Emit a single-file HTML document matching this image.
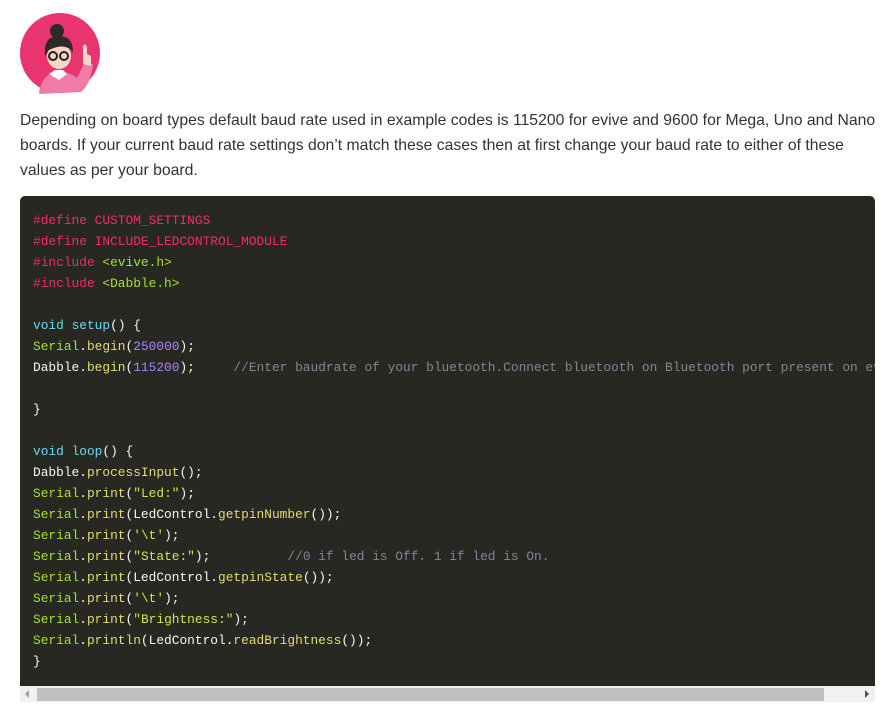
<!DOCTYPE html>
<html><head><meta charset="utf-8"><style>
body{margin:0;background:#fff;width:892px;height:708px;overflow:hidden;font-family:"Liberation Sans",sans-serif;}
p{position:absolute;left:20px;top:108px;margin:0;width:880px;font-size:15.75px;line-height:25px;color:#333;white-space:nowrap;}
.code{position:absolute;left:20px;top:196px;width:855px;height:490px;background:#272822;border-radius:5px 5px 0 0;overflow:hidden;}
pre{margin:0;position:absolute;left:13px;top:14px;font-family:"Liberation Mono",monospace;font-size:12.85px;line-height:21px;color:#f8f8f2;}
.k{color:#f92672}.c{color:#66d9ef}.g{color:#a6e22e}.y{color:#e6db74}.n{color:#ae81ff}.m{color:#7c8799}.s{color:#d5e34b}
.sb{position:absolute;left:20px;top:686px;width:855px;height:16px;background:#f1f1f1;}
.th{position:absolute;left:37px;top:688px;width:787px;height:13px;background:#c1c1c1;}
</style></head><body>
<svg width="82" height="82" style="position:absolute;left:19px;top:12px" viewBox="0 0 82 82">
<circle cx="41" cy="41" r="40" fill="#e8356f"/>
<path d="M20 82 Q22 62 38 60 Q52 60 58 66 L66 50 L74 52 Q72 72 62 80 Z" fill="#f07aa8"/>
<path d="M30 62 L40 68 L48 62 L44 58 L36 58Z" fill="#fff"/>
<ellipse cx="40" cy="44" rx="12" ry="13" fill="#f8d6c4"/>
<path d="M26 44 Q24 24 40 24 Q54 24 54 40 Q46 30 30 38 Z" fill="#2d2a2a"/>
<circle cx="38" cy="19" r="7" fill="#2d2a2a"/>
<circle cx="34" cy="44" r="4" fill="none" stroke="#222" stroke-width="2"/>
<circle cx="45" cy="44" r="4" fill="none" stroke="#222" stroke-width="2"/>
<path d="M64 52 L64 34 Q67 30 68 36 L68 42 L72 44 L72 54 Z" fill="#f8d6c4"/>
</svg>
<p>Depending on board types default baud rate used in example codes is 115200 for evive and 9600 for Mega, Uno and Nano<br>boards. If your current baud rate settings don’t match these cases then at first change your baud rate to either of these<br>values as per your board.</p>
<div class="code"><pre><span class="k">#define</span> <span class="k">CUSTOM_SETTINGS</span>
<span class="k">#define</span> <span class="k">INCLUDE_LEDCONTROL_MODULE</span>
<span class="k">#include</span> <span class="g">&lt;evive.h&gt;</span>
<span class="k">#include</span> <span class="g">&lt;Dabble.h&gt;</span>

<span class="c">void</span> <span class="c">setup</span>() {
<span class="g">Serial</span>.<span class="y">begin</span>(<span class="n">250000</span>);
Dabble.<span class="y">begin</span>(<span class="n">115200</span>);     <span class="m">//Enter baudrate of your bluetooth.Connect bluetooth on Bluetooth port present on evive.</span>

}

<span class="c">void</span> <span class="c">loop</span>() {
Dabble.<span class="y">processInput</span>();
<span class="g">Serial</span>.<span class="y">print</span>(<span class="s">"Led:"</span>);
<span class="g">Serial</span>.<span class="y">print</span>(LedControl.<span class="y">getpinNumber</span>());
<span class="g">Serial</span>.<span class="y">print</span>(<span class="s">'\t'</span>);
<span class="g">Serial</span>.<span class="y">print</span>(<span class="s">"State:"</span>);          <span class="m">//0 if led is Off. 1 if led is On.</span>
<span class="g">Serial</span>.<span class="y">print</span>(LedControl.<span class="y">getpinState</span>());
<span class="g">Serial</span>.<span class="y">print</span>(<span class="s">'\t'</span>);
<span class="g">Serial</span>.<span class="y">print</span>(<span class="s">"Brightness:"</span>);
<span class="g">Serial</span>.<span class="y">println</span>(LedControl.<span class="y">readBrightness</span>());
}</pre></div>
<div class="sb"></div><div class="th"></div>
<div style="position:absolute;left:25px;top:690px;width:0;height:0;border:4px solid transparent;border-right:4px solid #a3a3a3;border-left:0"></div>
<div style="position:absolute;left:865px;top:690px;width:0;height:0;border:4px solid transparent;border-left:4px solid #505050;border-right:0"></div>
</body></html>
